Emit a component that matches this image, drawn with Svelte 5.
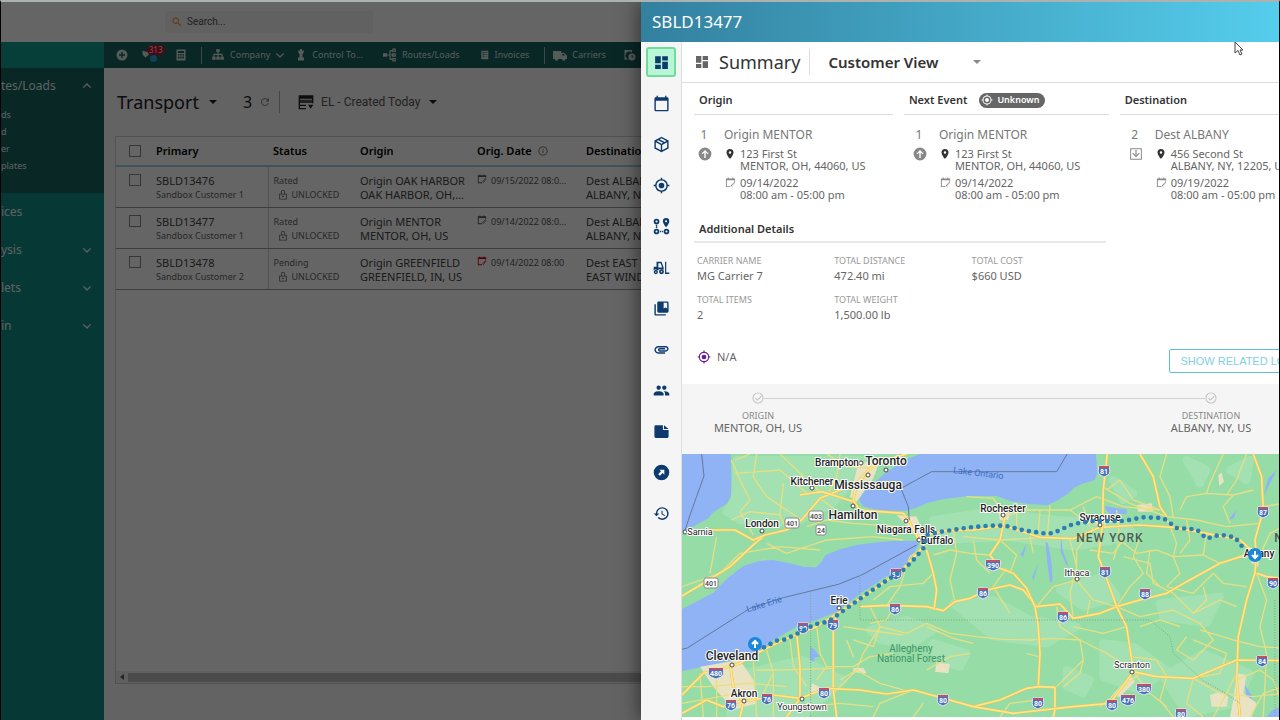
<script>
  const icons = {
    dashboard: "M3 13h8V3H3zM3 21h8v-6H3zM13 21h8V11h-8zM13 3v6h8V3z",
    calendar:
      "M20 3h-1V1h-2v2H7V1H5v2H4c-1.1 0-2 .9-2 2v16c0 1.1.9 2 2 2h16c1.1 0 2-.9 2-2V5c0-1.1-.9-2-2-2zm0 18H4V8h16v13z",
    box: "M12 1 2 6.500v11L12 23l10-5.500v-11zM12 3.300l6.900 3.800-2.600 1.400-6.900-3.800zM7.300 5.900l6.900 3.800L12 10.900 5.100 7.100zM4 8.800l7 3.900v7.500l-7-3.900zM20 8.800v7.500l-7 3.900v-7.500z",
    target:
      "M12 8a4 4 0 1 0 0 8 4 4 0 0 0 0-8zM11 1v2.100A9 9 0 0 0 3.100 11H1v2h2.100A9 9 0 0 0 11 20.900V23h2v-2.100A9 9 0 0 0 20.900 13H23v-2h-2.100A9 9 0 0 0 13 3.100V1zM12 5a7 7 0 1 1 0 14 7 7 0 0 1 0-14z",
    stops:
      "M5 1a4 4 0 1 0 0 8 4 4 0 0 0 0-8zm0 2.500a1.500 1.500 0 1 1 0 3 1.500 1.500 0 0 1 0-3zM5 15a4 4 0 1 0 0 8 4 4 0 0 0 0-8zm0 2.500a1.500 1.500 0 1 1 0 3 1.500 1.500 0 0 1 0-3zM19 15a4 4 0 1 0 0 8 4 4 0 0 0 0-8zm0 2.500a1.500 1.500 0 1 1 0 3 1.500 1.500 0 0 1 0-3zM18.500 0A4.500 4.500 0 0 0 14 4.500C14 8 18.500 13 18.500 13S23 8 23 4.500A4.500 4.500 0 0 0 18.500 0zm0 3a1.500 1.500 0 1 1 0 3 1.500 1.500 0 0 1 0-3zM4 10h2v2H4zM4 12.500h2v1.500H4zM10 18h1.500v2H10zM12.500 18H14v2h-1.500z",
    forklift:
      "M6 4h6l3 8v4h-1.200a4 4 0 0 0-6.600 0H6a3 3 0 0 0-5 .500V11h4V4zm1.500 2v6h5.500l-2.200-6zM4 15.500a3 3 0 1 0 0 6 3 3 0 0 0 0-6zm0 2a1 1 0 1 1 0 2 1 1 0 0 1 0-2zM12 14.500a3.500 3.500 0 1 0 0 7 3.500 3.500 0 0 0 0-7zm0 2.500a1 1 0 1 1 0 2 1 1 0 0 1 0-2zM17 4h1.700v15H23v2h-6z",
    bookmark:
      "M4 6H2v14c0 1.100.9 2 2 2h14v-2H4zM20 2H8c-1.100 0-2 .9-2 2v12c0 1.100.9 2 2 2h12c1.100 0 2-.9 2-2V4c0-1.100-.9-2-2-2zm0 10-2.500-1.500L15 12V4h5z",
    clip: "M2 12.500C2 9.460 4.460 7 7.500 7H18c2.210 0 4 1.790 4 4s-1.790 4-4 4H9.500C8.120 15 7 13.880 7 12.500S8.120 10 9.500 10H17v2H9.410c-.55 0-.55 1 0 1H18c1.100 0 2-.9 2-2s-.9-2-2-2H7.500C5.570 9 4 10.570 4 12.500S5.570 16 7.500 16H17v2H7.500C4.460 18 2 15.540 2 12.500z",
    people:
      "M16 11c1.660 0 2.990-1.340 2.990-3S17.660 5 16 5s-3 1.340-3 3 1.340 3 3 3zm-8 0c1.660 0 2.990-1.340 2.990-3S9.660 5 8 5 5 6.340 5 8s1.340 3 3 3zm0 2c-2.330 0-7 1.170-7 3.500V19h14v-2.500c0-2.330-4.670-3.500-7-3.500zm8 0c-.29 0-.62.02-.97.05 1.160.84 1.970 1.970 1.970 3.450V19h6v-2.500c0-2.330-4.670-3.500-7-3.500z",
    note: "M4 3h10v7h8v9a2 2 0 0 1-2 2H4a2 2 0 0 1-2-2V5a2 2 0 0 1 2-2zM15.500 3 22 8.500h-6.500z",
    launch:
      "M12 1a11 11 0 1 0 0 22 11 11 0 0 0 0-22zM9 8h7v7l-2.300-2.300-4 4L7.300 14.300l4-4z",
    history:
      "M13 3a9 9 0 0 0-9 9H1l3.890 3.890.07.14L9 12H6a7 7 0 1 1 7 7c-1.930 0-3.680-.79-4.940-2.060l-1.420 1.420A9 9 0 1 0 13 3zm-1 5v5l4.280 2.540.72-1.210-3.500-2.080V8z",
    pin: "M12 2a7 7 0 0 0-7 7c0 5.250 7 13 7 13s7-7.750 7-13a7 7 0 0 0-7-7zm0 4.500a2.500 2.500 0 1 1 0 5 2.500 2.500 0 0 1 0-5z",
    date: "M4 3h2V1h2v2h8V1h2v2h4v10l-7 9v-5h2l3.500-5V7H4v13h8v2H2V3zM13 18l6-6 2 2-6 6h-2z",
    search:
      "M15.500 14h-.79l-.28-.27A6.500 6.500 0 1 0 13.730 14.430l.27.28v.79l5 4.990L20.490 19zm-6 0a4.500 4.500 0 1 1 0-9 4.500 4.500 0 0 1 0 9z",
    up: "M12 1a11 11 0 1 0 0 22 11 11 0 0 0 0-22zM12 5l6 6-1.500 1.500L13.200 9.300V19h-2.400V9.300l-3.300 3.200L6 11z",
    down: "M2 2h20v20H2zM3.700 3.700v16.600h16.600V3.700zM11 5h2v9l4-4 1.300 1.300L12 17.600l-6.300-6.300L7 10l4 4z",
    plus: "M12 1a11 11 0 1 0 0 22 11 11 0 0 0 0-22zM10.500 6h3v4.500H18v3h-4.500V18h-3v-4.500H6v-3h4.500z",
    calculator:
      "M3 1h18v22H3zM6 4v4h12V4zM6 10v3h3v-3zM10.500 10v3h3v-3zM15 10v3h3v-3zM6 15v4h3v-4zM10.500 15v4h3v-4zM15 15v4h3v-4z",
    flag: "M1 3l8 3 5-3v8l-7 6-6-6z",
    org: "M9 2h6v5h-2v3h7v5h2v5h-6v-5h2v-3h-5v3h2v5H9v-5h2v-3H6v3h2v5H2v-5h2v-5h7V7H9z",
    tower: "M10 0h4v3h4l-1 5-2 2v7h3v6H6v-6h3v-7L7 8 6 3h4z",
    routes:
      "M0 9h7v6H0zM7 11h4V4h5V1h6v6h-6V6h-3v12h3v-1h6v6h-6v-3h-5v-7H7zM15 9h7v6h-7v-2h-3v-2h3zM18 3v2h2V3zM18 11v2h2v-2zM18 19v2h2v-2z",
    grid: "M3 2h17v20H3zM5 6v1h13V6zM5 11v1h13v-1zM5 16v1h13v-1zM8 4v15h1V4z",
    truck:
      "M0 5h14v3h5l5 5v6h-2.500a3 3 0 0 1-6 0H9a3 3 0 0 1-6 0H0zM16 10v3h5l-3-3z",
    coins: "M1 2h15v5a8 8 0 1 0-6 14H1zM16 9a7 7 0 1 1 0 14 7 7 0 0 1 0-14zM15 12v5h4v-2h-2v-3z",
    lock: "M12 0a5 5 0 0 0-5 5v4H3v14h18V9h-4V5a5 5 0 0 0-5-5zm0 2a3 3 0 0 1 3 3v4H9V5a3 3 0 0 1 3-3zM5 11h14v10H5zM10 14h4v3h-4z",
    view: "M1 2h22v12h-2v-1H3v3h9v2H3v3h9v2H1zM3 7v1.500h18V7zM3 10v1h18v-1zM15 16h8l-4 6z",
    refresh:
      "M17.650 6.350A8 8 0 1 0 19.730 14h-2.080A6 6 0 1 1 12 6c1.660 0 3.140.69 4.220 1.780L13 11h7V4z",
    info: "M12 1a11 11 0 1 0 0 22 11 11 0 0 0 0-22zM12 3a9 9 0 1 1 0 18 9 9 0 0 1 0-18zM11 7h2v2h-2zM11 11h2v6h-2z",
    check:
      "M12 1a11 11 0 1 0 0 22 11 11 0 0 0 0-22zM12 2.700a9.300 9.300 0 1 1 0 18.600 9.300 9.300 0 0 1 0-18.600zM7.200 11.500l3.600 3.600 7-7 1.200 1.200-8.200 8.200L6 12.700z",
    caret: "M4 8h16l-8 8z",
    chevronDown: "M4 7l8 7.500L20 7l2 2-10 10L2 9z",
    chevronUp: "M4 17l8-7.500L20 17l2-2L12 5 2 15z",
  };

  const rail = [
    ["dashboard", "Summary"],
    ["calendar", "Schedule"],
    ["box", "Items"],
    ["target", "Tracking"],
    ["stops", "Stops"],
    ["forklift", "Equipment"],
    ["bookmark", "References"],
    ["clip", "Attachments"],
    ["people", "Contacts"],
    ["note", "Notes"],
    ["launch", "Open"],
    ["history", "History"],
  ];

  const subLinks = ["ds", "d", "er", "plates"];
  const sideLinks = [
    ["ices", false],
    ["ysis", true],
    ["lets", true],
    ["in", true],
  ];

  const rows = [
    {
      id: "SBLD13476",
      customer: "Sandbox Customer 1",
      status: "Rated",
      origin: "Origin OAK HARBOR",
      from: "OAK HARBOR, OH,...",
      date: "09/15/2022 08:0...",
      dest: "Dest ALBANY",
      to: "ALBANY, NY, US",
    },
    {
      id: "SBLD13477",
      customer: "Sandbox Customer 1",
      status: "Rated",
      origin: "Origin MENTOR",
      from: "MENTOR, OH, US",
      date: "09/14/2022 08:0...",
      dest: "Dest ALBANY",
      to: "ALBANY, NY, US",
    },
    {
      id: "SBLD13478",
      customer: "Sandbox Customer 2",
      status: "Pending",
      origin: "Origin GREENFIELD",
      from: "GREENFIELD, IN, US",
      date: "09/14/2022 08:00",
      dest: "Dest EAST WINDSOR",
      to: "EAST WINDSOR, CT",
      late: true,
    },
  ];

  const stops = [
    {
      title: "Origin",
      number: 1,
      icon: "up",
      name: "Origin MENTOR",
      street: "123 First St",
      city: "MENTOR, OH, 44060, US",
      date: "09/14/2022",
      hours: "08:00 am - 05:00 pm",
    },
    {
      title: "Next Event",
      badge: "Unknown",
      number: 1,
      icon: "up",
      name: "Origin MENTOR",
      street: "123 First St",
      city: "MENTOR, OH, 44060, US",
      date: "09/14/2022",
      hours: "08:00 am - 05:00 pm",
    },
    {
      title: "Destination",
      number: 2,
      icon: "down",
      name: "Dest ALBANY",
      street: "456 Second St",
      city: "ALBANY, NY, 12205, US",
      date: "09/19/2022",
      hours: "08:00 am - 05:00 pm",
    },
  ];

  const details = [
    ["CARRIER NAME", "MG Carrier 7"],
    ["TOTAL DISTANCE", "472.40 mi"],
    ["TOTAL COST", "$660 USD"],
    ["TOTAL ITEMS", "2"],
    ["TOTAL WEIGHT", "1,500.00 lb"],
  ];

  // map geometry, drawn at three units per pixel
  const water = [
    "M100 42H272L274 130 273 165 262 190 240 204 218 218 205 235 180 248 145 268 100 282Z",
    "M840 42 800 58 765 80 735 100 700 130 672 155 657 180 668 198 700 208 740 212 800 212 830 203 860 190 910 177 990 168 1070 168 1110 183 1165 192 1222 196 1255 180 1285 160 1300 145 1325 132 1365 120 1372 98 1368 42Z",
    "M100 520 160 490 220 458 262 415 310 378 360 362 400 360 450 370 490 380 528 382 545 365 556 346 600 328 650 315 700 308 760 303 828 302 838 312 818 345 795 380 735 412 660 462 590 515 530 540 470 560 400 600 350 642 300 656 230 672 160 686 100 700Z",
    "M1395 198 1425 204 1460 208 1460 222 1410 222 1398 210Z",
    "M1217 305 1224 310 1235 370 1238 425 1230 425 1222 370Z",
    "M1263 285 1268 330 1287 382 1278 372 1262 335Z",
    "M1160 310 1150 350 1142 345ZM1195 370 1180 422 1177 410Z",
    "M1765 240 1790 210 1782 235ZM1870 170 1885 115 1910 90 1890 130ZM1880 830 1895 812 1930 795V840ZM1815 735 1835 765 1832 800 1820 770Z",
    "M510 620 522 628 540 650 526 652 520 665 510 660Z",
  ];
  const tints = [
    "M290 60 680 60 620 140 580 190 480 240 400 250 300 240 260 215 285 180Z",
    "M140 530 230 480 300 410 370 370 530 410 480 430 300 490 140 620Z",
    "M880 240 1050 215 1250 240 1450 250 1490 290 1300 320 1100 290 900 300Z",
    "M690 570 800 540 880 570 820 610 720 600Z",
    "M940 490 1060 480 1170 540 1310 560 1220 610 1060 590Z",
    "M1260 450 1390 410 1430 470 1330 500ZM1560 490 1740 470 1700 550 1570 530Z",
    "M310 700 490 660 610 720 500 820 270 820ZM1570 710 1690 640 1830 700 1790 790 1640 820Z",
    "M1390 610 1480 620 1580 690 1500 750 1390 710Z",
    "M880 610 980 640 960 680 890 660ZM1280 690 1350 720 1330 760 1280 740Z",
    "M1420 120 1480 160 1450 180ZM1640 60 1700 90 1680 130ZM1770 90 1830 60 1820 120Z",
  ];
  const towns = [
    "M655 70 720 62 700 115 650 185 630 170ZM770 225 830 230 860 300 830 290Z",
    "M180 680 300 660 340 720 350 790 280 810 220 740Z",
    "M640 685 670 683 680 700 640 697ZM890 668 930 672 925 700 885 695Z",
    "M515 730 540 742 530 760 512 755ZM1490 195 1535 190 1540 215 1495 215Z",
    "M1450 730 1470 705 1485 725 1440 770 1412 770ZM1735 105 1745 98 1752 125 1738 138Z",
    "M1710 765 1740 755 1765 770 1760 800 1715 800ZM1790 700 1820 705 1810 760 1850 790 1835 831 1770 831 1780 780Z",
    "M1075 215 1110 220 1105 240 1080 240ZM1365 235 1400 235 1395 262 1370 255Z",
    "M1820 320 1860 330 1855 380 1835 370Z",
  ];
  const highways = [
    "M126 468 190 430 270 380 345 310 375 285 440 270 485 240 540 175 600 150 650 130 690 85 730 62 800 42",
    "M130 275 220 270 285 270 340 300 375 285",
    "M480 165 545 155 600 172 640 185 660 210 720 215 790 220 808 245 835 298",
    "M650 130 640 180 655 205",
    "M126 765 190 700 250 685 300 670 350 640 430 600 530 560 600 515 700 450 790 385 850 320 860 285 920 272 1000 270 1095 258 1200 292 1300 296 1380 262 1500 255 1600 262 1700 280 1800 300 1850 345",
    "M590 520 580 560 580 750 590 831",
    "M660 500 740 496 860 500 910 512 945 485 990 475 1040 450 1110 435 1150 450 1190 500 1260 492 1300 535 1380 520 1430 500 1500 480 1580 460 1640 425 1740 370 1850 335",
    "M1095 230 1080 300 1050 345 1080 385 1120 400 1160 445 1185 500 1195 560 1200 640 1195 740",
    "M1402 42 1390 150 1388 250 1375 350 1405 430 1430 500 1460 560 1480 690",
    "M1195 740 1245 742 1245 810 1240 831M1000 800 1080 780 1160 745 1195 740",
    "M400 765 480 775 560 745 660 750 740 762 820 750 910 775 1000 800 1120 820 1300 800 1410 790 1480 695",
    "M1840 42 1865 110 1870 210 1845 300 1850 345 1845 400 1820 480 1795 590 1790 720 1800 831",
    "M1850 400 1880 410 1930 415M1480 695 1550 710 1660 715 1790 660 1930 662",
    "M470 580 480 680 480 775 440 831M270 670 280 740 310 790 300 831M310 790 250 800 200 780 126 820",
    "M270 790 400 770M860 330 880 400 890 450 882 510M1500 42 1540 110 1560 200 1580 230",
  ];
  const roads = [
    "M274 60 300 120 330 180 300 215 340 285M285 100 420 90 500 160M350 42 340 110 380 170 485 240M274 240 330 215 420 225M380 310 440 340 560 300 700 290 790 300M300 340 420 320 540 330M230 290 210 400M420 42 470 90 540 155M600 42 590 110 560 170M560 42 620 80 690 85M540 175 600 220 660 225M700 62 670 120 690 150",
    "M700 480 750 440 850 430 880 400M690 500 720 560 670 640 650 690 600 720M720 560 800 580 860 550 930 580 1010 590 1090 598 1170 600 1240 595 1320 600 1400 640 1480 690M610 560 680 570 790 585M650 690 720 730 790 750M650 690 580 760M740 496 780 440 810 350 860 320M450 600 460 680 500 740M380 630 400 700 370 760",
    "M1000 610 940 595 860 560M1250 500 1260 560 1320 600 1330 660 1250 740M1300 535 1290 460 1310 380 1290 300M1360 262 1310 330 1310 420 1360 480 1430 500M1230 196 1222 290M970 290 1080 300 1220 292M980 170 1060 175 1095 230M1090 230 1160 210 1290 210 1370 170 1450 200 1560 210M1100 385 1060 440 1110 520",
    "M1388 140 1470 190 1580 230 1670 240 1760 260 1860 250M1580 42 1560 110 1590 170 1600 230M1620 210 1640 170 1700 160 1780 165 1840 150M1750 42 1710 130 1700 160M1780 165 1750 200 1770 250M1580 235 1610 310 1600 350 1690 345M1440 300 1490 340 1550 330 1600 350 1620 400 1580 440M1450 350 1530 370 1540 430 1600 460M1500 290 1480 350 1510 400 1470 440 1430 500",
    "M1580 440 1660 460 1720 400 1750 430 1820 440M1600 460 1660 520 1740 480 1790 500M1430 500 1500 530 1600 510 1680 550 1720 600 1660 660 1610 630 1640 590M1680 570 1780 600 1860 620 1930 625M1660 600 1760 640 1740 700 1660 715M1500 560 1560 540 1620 560M1470 650 1550 660 1580 710 1560 780 1600 831",
    "M1660 715 1640 790 1690 831M1660 715 1740 760 1840 770 1930 760M1790 720 1860 690 1900 720 1930 800M1830 831 1870 760 1930 740M1500 700 1430 760 1380 800M1480 695 1530 760 1580 800M1720 831 1760 760 1790 700M1860 345 1890 280 1930 260M1870 200 1930 190M1850 400 1880 480 1860 560 1880 640 1870 831",
    "M126 740 200 740 330 730 440 740M350 690 420 690 580 685M180 700 190 831M230 680 230 831M340 660 350 831M400 700 400 831M126 790 240 770 330 750M500 800 600 790 700 800M530 560 540 640 560 680 530 720M620 600 640 650M860 690 930 650 990 640M700 831 720 790 820 750M820 831 850 790M1080 831 1110 790 1190 780",
    "M1330 660 1320 700 1270 740M1290 210 1330 240 1370 255M1200 210 1195 280M1130 215 1130 260M1000 300 1010 360 1050 400M1350 330 1420 340 1450 300M1310 420 1240 440 1190 500M1050 345 990 340 930 330 880 345M940 270 950 340 930 420 945 485M1080 300 1130 345 1110 400M1170 290 1180 340",
    "M1400 150 1440 120 1480 180 1560 210M1330 200 1350 260M1430 210 1440 300 1420 360M1640 240 1650 300 1620 340M1700 280 1690 345 1740 370M1820 42 1790 120 1760 165M1690 440 1700 480 1660 520M1530 330 1520 400 1560 440M1300 560 1390 580 1460 560M1350 480 1340 530",
    "M126 440 240 400 300 340M285 60 330 42M430 130 420 225 440 270M500 260 560 240 640 250 780 260M690 550 740 540 760 500M640 600 700 620 720 560M1160 640 1195 650M560 680 640 680 690 650 760 640",
  ];
  const borders = [
    "M185 42 192 108 150 225 134 275M126 628 142 624 330 505 430 473 595 433 665 405 830 315M808 240 805 200 783 145 875 95 1250 95 1282 42",
  ];
  const dottedBorders = ["M512 450V831M660 405V540H1530L1590 590 1600 640 1690 722 1760 762 1800 790M1905 480V831"];
  const routePath =
    "M372 622 410 602 430 600 470 582 525 553 565 545 620 505 690 455 745 418 790 390 820 360 850 325 860 285 905 275 990 262 1050 257 1095 257 1155 272 1220 281 1240 279 1300 252 1360 243 1450 243 1510 232 1570 234 1610 264 1670 268 1700 296 1740 284 1785 292 1815 330";

  const cities = [
    ["Brampton", 155, 12, 10],
    ["Toronto", 204, 11, 12],
    ["Kitchener", 130, 31, 10],
    ["Mississauga", 186, 35, 12],
    ["Hamilton", 171, 65, 12],
    ["London", 80, 73, 10],
    ["Sarnia", 18, 81, 9],
    ["Niagara Falls", 224, 79, 10],
    ["Buffalo", 255, 90, 10],
    ["Erie", 157, 150, 10],
    ["Cleveland", 50, 206, 12],
    ["Akron", 62, 243, 10],
    ["Youngstown", 120, 256, 9],
    ["Rochester", 321, 58, 10],
    ["Syracuse", 418, 67, 10],
    ["Ithaca", 395, 122, 9],
    ["Scranton", 450, 214, 9],
    ["Albany", 577, 103, 10],
  ];
  const cityDots = [
    [179, 9], [204, 16], [130, 34], [186, 21], [171, 52], [80, 77], [3, 78],
    [224, 67], [237, 86], [157, 154], [50, 211], [62, 247], [120, 245],
    [321, 61], [418, 71], [395, 125], [450, 218],
  ];
  const shields = [
    ["90", 214, 120], ["90", 121, 174], ["79", 151, 171], ["86", 213, 155],
    ["480", 34, 219], ["76", 49, 251], ["76", 85, 245], ["80", 142, 239],
    ["80", 261, 246], ["81", 422, 17], ["87", 581, 58], ["390", 311, 111],
    ["86", 301, 139], ["86", 381, 163], ["81", 423, 118], ["88", 463, 140],
    ["90", 591, 129], ["84", 580, 207], ["380", 462, 235], ["476", 446, 246],
    ["80", 430, 251], ["80", 356, 249], ["80", 499, 260],
  ];
  const routeSigns = [
    ["401", 110, 69],
    ["403", 134, 62],
    ["24", 139, 76],
    ["401", 29, 129],
  ];
</script>

{#snippet icon(name, cls = "")}
  <svg class="icon {cls}" viewBox="0 0 24 24" aria-hidden="true">
    <path d={icons[name]} fill-rule="evenodd" />
  </svg>
{/snippet}

<div class="frame">
  <div class="page">
    <header class="topbar">
      <label class="search">
        {@render icon("search", "small")}
        <input type="text" placeholder="Search..." aria-label="Search" />
      </label>
    </header>

    <aside class="sidebar">
      <div class="side-head"></div>
      <div class="side-group">
        <a class="side-link" href="#loads">
          <span>tes/Loads</span>{@render icon("chevronUp", "tiny")}
        </a>
        {#each subLinks as link}
          <a class="sub-link" href="#loads">{link}</a>
        {/each}
      </div>
      {#each sideLinks as [label, more]}
        <a class="side-link" href="#side">
          <span>{label}</span>
          {#if more}{@render icon("chevronDown", "tiny")}{/if}
        </a>
      {/each}
    </aside>

    <nav class="navbar">
      <button type="button" aria-label="Add">{@render icon("plus", "small")}</button>
      <button type="button" class="alerts" aria-label="Alerts">
        {@render icon("flag", "small")}
        <span class="dot"></span>
        <span class="count">313</span>
      </button>
      <button type="button" aria-label="Calculator">{@render icon("calculator", "small")}</button>
      <span class="rule"></span>
      <a class="company" href="#company">
        {@render icon("org")}Company{@render icon("chevronDown", "tiny")}
      </a>
      <a class="control" href="#tower">{@render icon("tower", "small")}Control To...</a>
      <a class="loads" href="#routes">{@render icon("routes")}Routes/Loads</a>
      <a class="invoices" href="#invoices">{@render icon("grid", "tiny")}Invoices</a>
      <span class="rule"></span>
      <a class="carriers" href="#carriers">{@render icon("truck")}Carriers</a>
      <a href="#costs">{@render icon("coins", "small")}Costs</a>
    </nav>

    <main class="content">
      <div class="toolbar">
        <button type="button" class="title">Transport {@render icon("caret", "small")}</button>
        <span class="total">3</span>
        <button type="button" class="refresh" aria-label="Refresh">
          {@render icon("refresh", "small")}
        </button>
        <span class="rule"></span>
        <button type="button" class="saved">
          {@render icon("view", "large")}<span>EL - Created Today</span>{@render icon("caret", "small")}
        </button>
      </div>

      <div class="card">
        <table>
          <colgroup>
            <col class="c-check" />
            <col class="c-primary" />
            <col class="c-status" />
            <col class="c-origin" />
            <col class="c-date" />
            <col />
          </colgroup>
          <thead>
            <tr>
              <th><input type="checkbox" aria-label="Select all" /></th>
              <th>Primary</th>
              <th>Status</th>
              <th>Origin</th>
              <th>Orig. Date {@render icon("info", "tiny")}</th>
              <th>Destination</th>
            </tr>
          </thead>
          <tbody>
            {#each rows as row}
              <tr>
                <td><input type="checkbox" aria-label={`Select ${row.id}`} /></td>
                <td class="primary">{row.id}<small>{row.customer}</small></td>
                <td class="status">
                  {row.status}<small>{@render icon("lock", "tiny")}UNLOCKED</small>
                </td>
                <td>{row.origin}<br />{row.from}</td>
                <td class="date" class:late={row.late}>
                  {@render icon("date", "tiny")}<span>{row.date}</span>
                </td>
                <td>{row.dest}<br />{row.to}</td>
              </tr>
            {/each}
          </tbody>
        </table>
        <div class="scrollbar"><span></span></div>
      </div>
    </main>
  </div>

  <div class="backdrop"></div>

  <section class="drawer" aria-label="Load details">
    <h1>SBLD13477</h1>
    <div class="drawer-body">
      <nav class="rail">
        {#each rail as [name, label], i}
          <button type="button" class:active={i === 0} aria-label={label}>
            {@render icon(name, "rail-icon")}
          </button>
        {/each}
      </nav>

      <div class="panel">
        <div class="panel-head">
          {@render icon("dashboard", "large")}
          <h2>Summary</h2>
          <span class="rule"></span>
          <button type="button" class="view">
            Customer View {@render icon("caret", "small")}
          </button>
        </div>

        <div class="stops">
          {#each stops as stop}
            <article>
              <h3>
                {stop.title}
                {#if stop.badge}
                  <span class="badge">{@render icon("target", "small")}{stop.badge}</span>
                {/if}
              </h3>
              <div class="stop">
                <span class="number">{stop.number}</span>
                <span class="name">{stop.name}</span>
                {@render icon(stop.icon, "kind")}
                {@render icon("pin", "pin")}
                <p>{stop.street}<br />{stop.city}</p>
                {@render icon("date", "when")}
                <p>{stop.date}<br />{stop.hours}</p>
              </div>
            </article>
          {/each}
        </div>

        <h3 class="more">Additional Details</h3>
        <dl>
          {#each details as [label, value]}
            <div>
              <dt>{label}</dt>
              <dd>{value}</dd>
            </div>
          {/each}
        </dl>

        <div class="related">
          <span class="na">{@render icon("target")}N/A</span>
          <button type="button">SHOW RELATED LOADS</button>
        </div>

        <div class="progress">
          <div class="step">
            {@render icon("check", "small")}
            <small>ORIGIN</small>
            <span>MENTOR, OH, US</span>
          </div>
          <div class="line"></div>
          <div class="step">
            {@render icon("check", "small")}
            <small>DESTINATION</small>
            <span>ALBANY, NY, US</span>
          </div>
        </div>

        <svg
          class="map"
          viewBox="0 0 597 263"
          preserveAspectRatio="xMidYMid slice"
          role="img"
          aria-label="Route from Mentor to Albany"
        >
          <rect class="land" width="597" height="263" />
          <g transform="translate(-42 -14) scale(0.3333)">
            {#each tints as d}<path class="tint" {d} />{/each}
            {#each water as d}<path class="water" {d} />{/each}
            {#each towns as d}<path class="town" {d} />{/each}
            {#each roads as d}<path class="road" {d} />{/each}
            {#each highways as d}
              <path class="highway-edge" {d} />
              <path class="highway" {d} />
            {/each}
            {#each borders as d}<path class="border" {d} />{/each}
            {#each dottedBorders as d}<path class="border dotted" {d} />{/each}
          </g>
          {#each shields as [label, x, y]}
            <g transform={`translate(${x} ${y})`}>
              <path
                class="shield"
                d={label.length > 2
                  ? "M-7 -5H7Q9 2 5 4L0 6L-5 4Q-9 2 -7 -5Z"
                  : "M-5 -5H5Q7 2 4 4L0 6L-4 4Q-7 2 -5 -5Z"}
              />
              <path class="shield-top" d={label.length > 2 ? "M-7 -5H7V-3H-7Z" : "M-5 -5H5V-3H-5Z"} />
              <text class="shield-text" y="3">{label}</text>
            </g>
          {/each}
          {#each routeSigns as [label, x, y]}
            <g transform={`translate(${x} ${y})`}>
              <rect
                class="sign"
                x={label.length > 2 ? -7 : -5}
                y="-5"
                width={label.length > 2 ? 14 : 10}
                height="10"
                rx="2"
              />
              <text class="sign-text" y="3">{label}</text>
            </g>
          {/each}
          {#each cityDots as [x, y]}
            <circle class="city-dot" cx={x} cy={y} r="2" />
          {/each}
          {#each cities as [name, x, y, size]}
            <text class="city s{size}" {x} {y}>{name}</text>
          {/each}
          <text class="state" x="428" y="88">NEW YORK</text>
          <text class="state" x="597" y="88">N</text>
          <text class="park" x="229" y="198">Allegheny</text>
          <text class="park" x="229" y="208">National Forest</text>
          <text class="lake" transform="translate(83 153) rotate(-17)">Lake Erie</text>
          <text class="lake" transform="translate(296 22) rotate(7)">Lake Ontario</text>
          <path class="route" transform="translate(-42 -14) scale(0.3333)" d={routePath} />
          <g class="marker" transform="translate(73 190)">
            <circle r="7" />
            <path d="M0 4V-3M-3 0L0 -3L3 0" />
          </g>
          <g class="marker" transform="translate(573 101)">
            <circle r="7" />
            <path d="M0 -4V3M-3 0L0 3L3 0" />
          </g>
        </svg>
      </div>
    </div>
  </section>

  <svg class="cursor" viewBox="0 0 10 15" aria-hidden="true">
    <path d="M1 1V12L4 9.500L6 14L8 13L6 9H9Z" />
  </svg>
</div>

<style>
  :global(body) {
    background: #000;
  }

  .frame {
    position: relative;
    box-sizing: border-box;
    min-height: 100vh;
    display: flex;
    border: solid #000;
    border-width: 2px 1px 0;
    border-top-color: #acb2b0;
    overflow: hidden;
    font-family: "Noto Sans", sans-serif;
    font-size: 11px;
    line-height: 12px;
    color: #222;
  }

  button,
  input {
    font: inherit;
    color: inherit;
  }

  button {
    display: inline-flex;
    align-items: center;
    padding: 0;
    border: 0;
    background: transparent;
  }

  a {
    color: inherit;
    text-decoration: none;
  }

  h1,
  h2,
  h3,
  p,
  dl,
  dd {
    margin: 0;
  }

  .icon {
    width: 14px;
    height: 14px;
    flex: none;
    fill: currentColor;
  }

  .icon.tiny {
    width: 10px;
    height: 10px;
  }

  .icon.small {
    width: 12px;
    height: 12px;
  }

  .icon.large {
    width: 16px;
    height: 16px;
  }

  .rule {
    flex: none;
    width: 1px;
    height: 22px;
    background: #b0b0b0;
  }

  .page {
    flex: 1;
    min-width: 0;
    display: grid;
    grid-template-columns: 103px minmax(0, 1fr);
    grid-template-rows: 40px 26px 1fr;
    background: #f7f7f7;
  }

  .topbar {
    grid-column: 1 / -1;
    padding: 9px 0 0 164px;
    background: #fcfcfc;
  }

  .search {
    display: flex;
    align-items: center;
    gap: 4px;
    width: 208px;
    height: 22px;
    padding-left: 6px;
    box-sizing: border-box;
    border-radius: 3px;
    background: #f3f2f2;
    color: #ff8a1c;
  }

  .search input {
    width: 160px;
    border: 0;
    padding: 0;
    background: transparent;
    font-family: Roboto, sans-serif;
    font-size: 10px;
  }

  .search input::placeholder {
    color: #555;
  }

  .sidebar {
    grid-row: 2 / 4;
    background: #108f86;
    color: #e6f4f2;
    font-size: 12px;
  }

  .side-head {
    height: 26px;
    background: #0f9b8f;
  }

  .side-group {
    height: 125px;
    background: #14625d;
  }

  .side-link {
    display: flex;
    align-items: center;
    justify-content: space-between;
    height: 38px;
    padding-right: 12px;
  }

  .side-group .side-link {
    height: 36px;
  }

  .sub-link {
    display: block;
    height: 17px;
    font-size: 9px;
    line-height: 21px;
  }

  .navbar {
    display: flex;
    align-items: center;
    padding-left: 12px;
    background: #14625d;
    color: #d5e2e0;
    font-size: 9px;
    white-space: nowrap;
  }

  .navbar a {
    display: flex;
    align-items: center;
    gap: 5px;
  }

  .navbar button {
    margin-right: 14px;
  }

  .navbar .alerts {
    position: relative;
    width: 20px;
    height: 20px;
    margin-right: 13px;
  }

  .navbar .dot {
    position: absolute;
    left: 8px;
    top: 10px;
    width: 7px;
    height: 7px;
    border-radius: 50%;
    background: #2fa0d8;
  }

  .navbar .count {
    position: absolute;
    left: 5px;
    top: 0;
    padding: 0 2px;
    border-radius: 5px;
    background: #c8102e;
    font-size: 8px;
    line-height: 10px;
  }

  .navbar .company {
    margin: 0 10px 0 9px;
  }

  .navbar .control,
  .navbar .loads {
    margin-right: 20px;
  }

  .navbar .invoices {
    margin-right: 15px;
  }

  .navbar .carriers {
    margin: 0 18px 0 8px;
  }

  .navbar .rule {
    height: 17px;
  }

  .content {
    display: flex;
    flex-direction: column;
    padding: 0 0 36px 11px;
  }

  .toolbar {
    display: flex;
    align-items: center;
    height: 68px;
    padding-left: 2px;
    color: #222;
    white-space: nowrap;
  }

  .title {
    gap: 8px;
    font-size: 18px;
  }

  .total {
    margin: 0 7px 0 24px;
    font-size: 16px;
  }

  .refresh {
    margin-right: 8px;
    color: #888;
  }

  .saved {
    gap: 7px;
    margin-left: 18px;
    font-family: Roboto, sans-serif;
    font-size: 12px;
  }

  .saved span {
    color: #555;
  }

  .card {
    flex: 1;
    display: flex;
    flex-direction: column;
    border: 1px solid #ccc;
    background: #fcfcfc;
  }

  table {
    width: 100%;
    table-layout: fixed;
    border-collapse: collapse;
    color: #444;
    white-space: nowrap;
  }

  .c-check {
    width: 40px;
  }

  .c-primary {
    width: 112px;
  }

  .c-status {
    width: 92px;
  }

  .c-origin {
    width: 117px;
  }

  .c-date {
    width: 109px;
  }

  th,
  td {
    padding: 0;
    text-align: left;
  }

  th {
    height: 28px;
    border-bottom: 2px solid #9bd3e0;
    color: #000;
    font-weight: 600;
  }

  th .icon {
    margin-left: 3px;
    vertical-align: -1px;
    color: #555;
  }

  th:nth-child(3),
  td:nth-child(3) {
    padding-left: 5px;
  }

  td {
    height: 33px;
    padding: 7px 0 0;
    border-bottom: 1px solid #999;
    line-height: 14px;
    vertical-align: top;
  }

  th:first-child,
  td:first-child {
    padding-left: 13px;
  }

  td small {
    display: flex;
    align-items: center;
    gap: 4px;
    font-size: 9px;
    color: #666;
  }

  .primary {
    border-right: 1px solid #ccc;
  }

  .status {
    font-size: 9px;
    color: #666;
  }

  .status small {
    padding-left: 4px;
  }

  .date {
    font-size: 9px;
    color: #555;
  }

  .date span {
    margin-left: 4px;
  }

  .late .icon {
    color: #d0021b;
  }

  input[type="checkbox"] {
    appearance: none;
    display: block;
    box-sizing: border-box;
    width: 12px;
    height: 12px;
    margin: 0;
    border: 1px solid #888;
  }

  .scrollbar {
    display: flex;
    align-items: center;
    margin-top: auto;
    height: 12px;
    background: #eee;
  }

  .scrollbar::before {
    content: "";
    margin: 0 4px;
    border: solid transparent;
    border-width: 3px 4px 3px 0;
    border-right-color: #555;
  }

  .scrollbar span {
    width: 70%;
    height: 9px;
    background: #bbb;
  }

  .backdrop {
    position: absolute;
    inset: 0;
    background: rgba(0, 0, 0, 0.6);
  }

  .drawer {
    position: absolute;
    inset: 0 0 0 auto;
    width: calc(50% - 1px);
    display: flex;
    flex-direction: column;
    overflow: hidden;
    background: #fff;
    box-shadow: -2px 0 18px rgba(0, 0, 0, 0.5);
    color: #666;
  }

  h1 {
    flex: none;
    padding-left: 11px;
    background: linear-gradient(90deg, #33809f, #55cdec);
    color: #fff;
    font-size: 17px;
    font-weight: 400;
    line-height: 40px;
  }

  .drawer-body {
    flex: 1;
    min-height: 0;
    display: flex;
  }

  .rail {
    flex: none;
    width: 40px;
    display: flex;
    flex-direction: column;
    align-items: center;
    gap: 11px;
    padding-top: 5px;
    border-right: 1px solid #ddd;
    background: #f5f5f5;
    color: #0d3b6e;
  }

  .rail button {
    box-sizing: border-box;
    width: 30px;
    height: 30px;
    flex: none;
    justify-content: center;
    border-radius: 3px;
  }

  .rail .active {
    border: 2px solid #6fdc9c;
    background: #b9f6d6;
  }

  .icon.rail-icon {
    width: 17px;
    height: 17px;
  }

  .panel {
    flex: 1;
    min-width: 0;
    display: flex;
    flex-direction: column;
    padding-bottom: 3px;
    overflow: hidden;
  }

  .panel-head {
    flex: none;
    display: flex;
    align-items: center;
    gap: 9px;
    height: 40px;
    padding-left: 12px;
    border-bottom: 1px solid #ddd;
  }

  .panel-head .rule {
    height: 26px;
    background: #ddd;
  }

  h2 {
    color: #333;
    font-size: 18px;
    font-weight: 400;
  }

  .view {
    gap: 32px;
    margin-left: 9px;
    color: #333;
    font-size: 15px;
    font-weight: 600;
  }

  .view .icon {
    color: #888;
  }

  .stops {
    display: grid;
    grid-template-columns: 34% 35% 35%;
    gap: 11px;
    padding-left: 12px;
  }

  h3 {
    display: flex;
    align-items: center;
    gap: 12px;
    height: 32px;
    padding: 3px 0 0 5px;
    box-sizing: border-box;
    border-bottom: 1px solid #ddd;
    color: #333;
    font-size: 11px;
    font-weight: 600;
  }

  .badge {
    display: flex;
    align-items: center;
    gap: 4px;
    height: 15px;
    padding: 0 6px 0 2px;
    border-radius: 8px;
    background: #666;
    color: #fff;
    font-size: 9px;
  }

  .stop {
    display: grid;
    grid-template-columns: 22px 16px auto;
    align-items: start;
    padding-top: 12px;
    white-space: nowrap;
  }

  article + article .stop {
    padding-left: 5px;
  }

  .number {
    width: 20px;
    text-align: center;
  }

  .number,
  .name {
    font-size: 12px;
    line-height: 16px;
    color: #777;
  }

  .name {
    grid-column: 2 / -1;
    padding-left: 8px;
  }

  .stop p {
    grid-column: 3;
    margin: 5px 0 0 8px;
  }

  .stop .kind {
    margin: 4px 0 0 4px;
    color: #888;
  }

  .stop .pin {
    width: 12px;
    height: 12px;
    margin: 5px 0 0 8px;
    color: #333;
  }

  .stop .when {
    grid-column: 2;
    width: 11px;
    height: 11px;
    margin: 5px 0 0 9px;
    color: #888;
  }

  .more {
    width: 69%;
    flex: none;
    margin: 14px 0 0 12px;
    height: 28px;
    padding-top: 2px;
    border-width: 2px;
    border-color: #e8e8e8;
  }

  dl {
    display: grid;
    grid-template-columns: repeat(3, 23%);
    row-gap: 10px;
    padding-top: 12px;
  }

  dl div {
    padding-left: 15px;
  }

  dt {
    color: #999;
    font-size: 9px;
    line-height: 12px;
  }

  dd {
    padding-top: 1px;
    line-height: 16px;
  }

  .related {
    display: flex;
    align-items: flex-start;
    justify-content: space-between;
    margin: 26px 0 11px 15px;
  }

  .na {
    display: flex;
    align-items: center;
    gap: 6px;
    line-height: 16px;
  }

  .na .icon {
    color: #6a1b9a;
  }

  .related button {
    box-sizing: border-box;
    height: 24px;
    margin-right: -40px;
    padding: 0 10px;
    border: 1px solid #5cc3d6;
    border-radius: 2px;
    color: #7fd0e4;
    font-family: "Liberation Sans", sans-serif;
    white-space: nowrap;
  }

  .progress {
    flex: none;
    display: flex;
    align-items: flex-start;
    justify-content: space-between;
    height: 70px;
    padding: 8px 26px 0 34px;
    box-sizing: border-box;
    background: #f5f5f5;
  }

  .step {
    display: flex;
    flex-direction: column;
    align-items: center;
    width: 84px;
    white-space: nowrap;
  }

  .step .icon {
    color: #bbb;
  }

  .step small {
    margin-top: 6px;
    color: #888;
    font-size: 9px;
    line-height: 12px;
  }

  .line {
    flex: 1;
    height: 1px;
    margin: 6px -36px 0;
    background: #d0d0d0;
  }

  .map {
    flex: 1;
    width: 100%;
    min-height: 0;
    font-family: Roboto, sans-serif;
    text-anchor: middle;
  }

  .land {
    fill: #96dca7;
  }

  .tint {
    fill: #a3e1b2;
    stroke: #a3e1b2;
    stroke-width: 24;
    stroke-linejoin: round;
  }

  .water {
    fill: #8fb3f5;
  }

  .town {
    fill: #e9e3c4;
  }

  .road,
  .highway,
  .highway-edge,
  .border,
  .route {
    fill: none;
    stroke-linejoin: round;
  }

  .road {
    stroke: #e8df82;
    stroke-width: 4;
  }

  .highway-edge {
    stroke: #eec450;
    stroke-width: 8;
  }

  .highway {
    stroke: #ffe68c;
    stroke-width: 5;
  }

  .border {
    stroke: #66789a;
    stroke-width: 3;
  }

  .dotted {
    stroke: #7ba58a;
    stroke-dasharray: 3 5;
  }

  .route {
    stroke: #2b7fb5;
    stroke-width: 14;
    stroke-linecap: round;
    stroke-dasharray: 0 22;
  }

  .shield {
    fill: #4b72b8;
    stroke: #dfe9f5;
  }

  .shield-top {
    fill: #c0506a;
  }

  .shield-text {
    fill: #fff;
    font-size: 7px;
    font-weight: 700;
  }

  .sign {
    fill: #fff;
    stroke: #888;
  }

  .sign-text {
    fill: #444;
    font-size: 7px;
    font-weight: 500;
  }

  .city-dot {
    fill: #fff;
    stroke: #444;
  }

  .city {
    fill: #222;
    font-weight: 500;
    stroke: #fff;
    stroke-width: 2px;
    paint-order: stroke;
  }

  .s9 {
    font-size: 9px;
    font-weight: 400;
  }

  .s10 {
    font-size: 10px;
  }

  .s12 {
    font-size: 12px;
  }

  .state {
    fill: #4a5c55;
    font-size: 12px;
    font-weight: 500;
    letter-spacing: 1px;
  }

  .park {
    fill: #3f9468;
    font-size: 10px;
  }

  .lake {
    fill: #3f6fc0;
    font-size: 9px;
  }

  .marker circle {
    fill: #1a87d8;
  }

  .marker path {
    fill: none;
    stroke: #fff;
    stroke-width: 2;
  }

  .cursor {
    position: absolute;
    left: 1233px;
    top: 39px;
    width: 10px;
    height: 15px;
    fill: #fff;
    stroke: #444;
  }
</style>
